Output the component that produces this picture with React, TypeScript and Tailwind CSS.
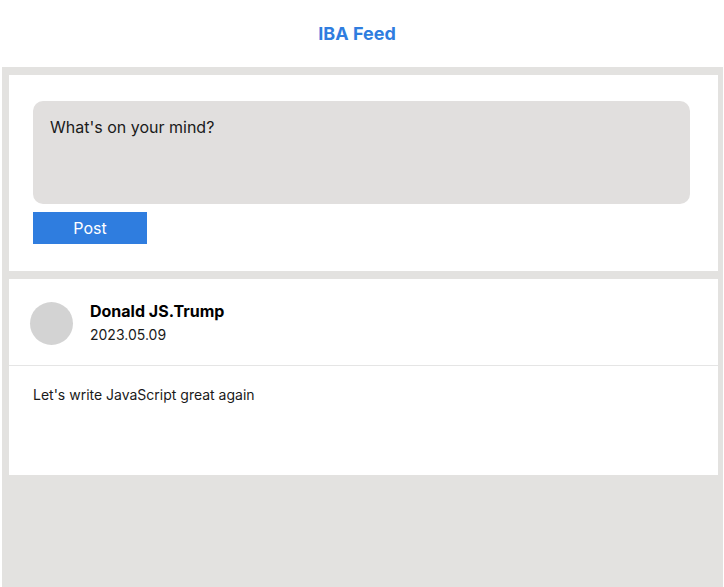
export default function App() {
  return (
    <div className="min-h-[587px] flex flex-col bg-white" style={{ fontFamily: "Inter, 'Noto Sans', sans-serif" }}>
      <header className="h-[67px] flex items-center justify-center pr-[10px]">
        <h1 className="text-[18px] font-bold text-[#2f7ddf] leading-none">IBA Feed</h1>
      </header>
      <main className="flex-1 ml-[2px] mr-[1px] bg-[#e3e2e0] pl-[7px] pr-[5px] pt-[8px] flex flex-col gap-[8px] min-h-[520px]">
        <section className="bg-white h-[196px] pl-[24px] pr-[28px] pt-[26px]">
          <div className="h-[103px] rounded-[10px] bg-[#e1dfde] px-[17px] pt-[16px] text-[16px] text-[#1a1a1a] leading-[20px]">
            What's on your mind?
          </div>
          <button className="mt-[8px] w-[114px] h-[32px] bg-[#2f7ddf] text-white text-[16px] leading-none">
            Post
          </button>
        </section>
        <section className="bg-white h-[196px] flex flex-col">
          <div className="h-[87px] flex items-start pl-[21px] border-b border-[#e5e5e5]">
            <div className="mt-[23px] w-[43px] h-[43px] rounded-full bg-[#d3d3d3]" />
            <div className="ml-[17px] mt-[22px] flex flex-col">
              <span className="text-[16px] font-bold text-black leading-[20px]">Donald JS.Trump</span>
              <span className="text-[14px] text-[#1a1a1a] leading-[20px] mt-[4px]">2023.05.09</span>
            </div>
          </div>
          <p className="px-[24px] pt-[20px] text-[14px] text-[#1a1a1a] leading-[18px]">Let's write JavaScript great again</p>
        </section>
      </main>
    </div>
  );
}
